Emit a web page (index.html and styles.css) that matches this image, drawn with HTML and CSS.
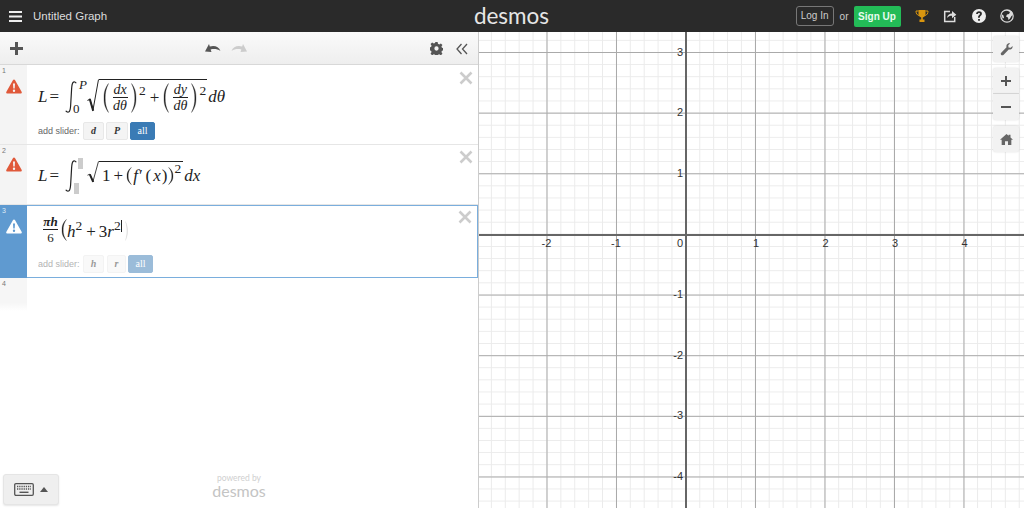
FILE: index.html
```html
<!DOCTYPE html>
<html lang="en">
<head>
<meta charset="utf-8">
<title>Untitled Graph - Desmos</title>
<link rel="stylesheet" href="styles.css">
</head>
<body>
<svg class="defs" width="0" height="0" aria-hidden="true">
  <defs>
    <symbol id="warn" viewBox="0 0 16 15"><path fill-rule="evenodd" d="M8 .5c.5 0 .8.2 1.100.7l6.500 11.600c.5.900 0 1.700-1 1.700H1.400c-1 0-1.500-.8-1-1.700L6.900 1.200C7.200.7 7.500.5 8 .5zM7 4.500l.3 5h1.400l.3-5H7zM8 10.500a1.200 1.200 0 1 0 0 2.400 1.200 1.200 0 0 0 0-2.400z"/></symbol>
    <symbol id="x" viewBox="0 0 14 14"><path d="M1.500 1.500l11 11M12.500 1.500l-11 11" fill="none" stroke="currentColor" stroke-width="2.600"/></symbol>
    <symbol id="lp" viewBox="0 0 6 30" preserveAspectRatio="none"><path d="M5.500.5C1.500 6 1 10 1 15s.5 9 4.500 14.500C2.800 24 2.200 20 2.200 15S2.800 6 5.500.5z" fill="#222" stroke="#222" stroke-width=".3"/></symbol>
    <symbol id="rp" viewBox="0 0 6 30" preserveAspectRatio="none"><path d="M.5.5C4.500 6 5 10 5 15s-.5 9-4.500 14.500C3.200 24 3.800 20 3.800 15S3.200 6 .5.5z" fill="#222" stroke="#222" stroke-width=".3"/></symbol>
    <symbol id="rad" viewBox="0 0 12 34" preserveAspectRatio="none"><path d="M.5 21l2.300-1.500L6 30 11.500.5" fill="none" stroke="#222" stroke-width="1"/><path d="M2.800 19.500L6.200 31" fill="none" stroke="#222" stroke-width="2"/></symbol>
    <symbol id="int" viewBox="0 0 12 32" preserveAspectRatio="none"><path d="M11.200 2.200C10.500 1 9 .5 8 1.500 7 2.500 6.800 5 6.600 8L5.600 25C5.400 28 5 30 4 30.800 3 31.500 1.500 31 .8 29.800" fill="none" stroke="#222" stroke-width="1.200"/></symbol>
  </defs>
</svg>
<div class="app">
  <header class="topbar">
    <div class="top-left">
      <svg class="hamburger" viewBox="0 0 13 11"><path d="M0 1h13M0 5.500h13M0 10h13" stroke="#eee" stroke-width="1.800"/></svg>
      <span class="title">Untitled Graph</span>
    </div>
    <div class="logo">desmos</div>
    <div class="top-right">
      <span class="login">Log In</span>
      <span class="or">or</span>
      <span class="signup">Sign Up</span>
      <svg class="trophy" viewBox="0 0 14 14"><path d="M3.500 1h7v4c0 2-1.500 3.200-2.700 3.500V10.500h1.700V13h-5V10.500h1.700V8.500C5 8.200 3.500 7 3.500 5z" fill="#d9960f"/><path d="M3.500 2H1c0 2.500 1 4 3 4.500M10.500 2H13c0 2.500-1 4-3 4.500" fill="none" stroke="#d9960f" stroke-width="1"/></svg>
      <svg class="top-icon" viewBox="0 0 14 14"><path d="M7 2.500H1.700v10h10V8" fill="none" stroke="#ddd" stroke-width="1.500"/><path d="M4 9c.3-3 2.500-4.500 5-4.500V2l4.300 3.700L9 9.300V6.800C7 6.800 5.300 7.300 4 9z" fill="#ddd"/></svg>
      <svg class="top-icon" viewBox="0 0 14 14"><path fill="#eee" fill-rule="evenodd" d="M7 0a7 7 0 1 1 0 14A7 7 0 0 1 7 0zM6.100 10v1.800h1.800V10H6.100zM7 2.300C5.300 2.300 4.200 3.300 4.100 5h1.800c.1-.8.500-1.100 1.100-1.100s1 .4 1 .9c0 1.200-2 1.300-2 3.500v.5h1.800v-.4c0-1.500 2.100-1.600 2.100-3.700 0-1.600-1.200-2.400-2.900-2.400z"/></svg>
      <svg class="top-icon" viewBox="0 0 14 14"><circle cx="7" cy="7" r="6.200" fill="none" stroke="#ddd" stroke-width="1.200"/><path d="M5 1.500l3 .5 2 1-1 2-2 .5-1 2 2 1 .5 2.500 1.500-1.500 1.500-2.500L13 6 12 3 9 1zM1.500 5l2 1.500L4 9l-1.500.5z" fill="#ddd"/></svg>
    </div>
  </header>
  <div class="main">
    <aside class="panel">
      <div class="toolbar">
        <svg class="tb-plus" viewBox="0 0 13 13"><path d="M6.500 0v13M0 6.500h13" stroke="#555" stroke-width="3"/></svg>
        <div class="history">
          <svg class="tb-arrow" viewBox="0 0 16 11"><path d="M0 8.500L4 1l.8 2.600C9.500 2 13.800 3.800 15.500 8 12.500 6 9 5.600 5.600 6.500L6.500 9z" fill="#555"/></svg>
          <svg class="tb-arrow redo" viewBox="0 0 16 11"><path d="M16 8.500L12 1l-.8 2.600C6.500 2 2.200 3.800.5 8 3.500 6 7 5.600 10.400 6.500L9.500 9z" fill="#ccc"/></svg>
        </div>
        <div class="tb-right">
          <svg class="gear" viewBox="0 0 14 14"><path fill="#555" fill-rule="evenodd" d="M5.800 0h2.400l.4 2 1.300.6 1.800-1.100 1.700 1.700-1.100 1.700.6 1.400 2 .4v2.400l-2 .4-.6 1.300 1.100 1.800-1.700 1.700-1.800-1.100-1.300.6-.4 2H5.800l-.4-2-1.300-.6-1.800 1.100-1.700-1.700 1.100-1.800-.6-1.300-2-.4V5.800l2-.4.6-1.400L.6 2.200 2.300.5l1.800 1.100 1.300-.6zM7 4.700a2.300 2.300 0 1 0 0 4.600 2.300 2.300 0 0 0 0-4.600z"/></svg>
          <svg class="collapse" viewBox="0 0 12 12"><path d="M5.500 1L1 6l4.500 5M11 1L6.500 6l4.500 5" fill="none" stroke="#555" stroke-width="1.300"/></svg>
        </div>
      </div>
      <div class="list">
        <section class="row row-one">
          <div class="gutter"><span class="num">1</span><svg class="warn"><use href="#warn"/></svg></div>
          <div class="body">
            <div class="math">
              <span>L</span><span class="op eq">=</span><svg class="integral"><use href="#int"/></svg>
              <span class="limits"><span class="lim-up">P</span><span class="upright lim-low">0</span></span>
              <span class="sqrt">
                <svg class="radical"><use href="#rad"/></svg>
                <span class="radicand">
                  <svg class="paren"><use href="#lp"/></svg>
                  <span class="frac"><span>dx</span><span class="bar"></span><span>dθ</span></span>
                  <svg class="paren"><use href="#rp"/></svg>
                  <sup class="power">2</sup>
                  <span class="op">+</span>
                  <svg class="paren"><use href="#lp"/></svg>
                  <span class="frac"><span>dy</span><span class="bar"></span><span>dθ</span></span>
                  <svg class="paren"><use href="#rp"/></svg>
                  <sup class="power">2</sup>
                </span>
              </span>
              <span class="tail">dθ</span>
            </div>
            <div class="sliders">
              <span class="add">add slider:</span>
              <span class="sbtn">d</span><span class="sbtn wide">P</span><span class="sbtn all">all</span>
            </div>
          </div>
          <svg class="del"><use href="#x"/></svg>
        </section>
        <section class="row row-two">
          <div class="gutter"><span class="num">2</span><svg class="warn"><use href="#warn"/></svg></div>
          <div class="body">
            <div class="math">
              <span>L</span><span class="op eq">=</span><svg class="integral"><use href="#int"/></svg>
              <span class="limits empty"><span class="slot"></span><span class="slot low"></span></span>
              <span class="sqrt small">
                <svg class="radical"><use href="#rad"/></svg>
                <span class="radicand">
                  <span class="upright">1</span><span class="op">+</span>
                  <svg class="paren mid"><use href="#lp"/></svg>
                  <span>f</span><span class="upright prime">′</span><span class="upright inner">(</span><span class="inner">x</span><span class="upright">)</span>
                  <svg class="paren mid"><use href="#rp"/></svg>
                  <sup class="power">2</sup>
                </span>
              </span>
              <span class="tail">dx</span>
            </div>
          </div>
          <svg class="del"><use href="#x"/></svg>
        </section>
        <section class="row row-three">
          <div class="gutter"><span class="num">3</span><svg class="warn"><use href="#warn"/></svg></div>
          <div class="body">
            <div class="math">
              <span class="frac first"><span>πh</span><span class="bar"></span><span class="upright">6</span></span>
              <svg class="paren big"><use href="#lp"/></svg>
              <span class="terms"><span>h</span><sup class="power">2</sup><span class="op">+</span><span class="upright">3</span><span>r</span><sup class="power cursor">2</sup></span>
              <svg class="paren faint"><use href="#rp"/></svg>
            </div>
            <div class="sliders faded">
              <span class="add">add slider:</span>
              <span class="sbtn">h</span><span class="sbtn narrow">r</span><span class="sbtn all">all</span>
            </div>
          </div>
          <svg class="del"><use href="#x"/></svg>
        </section>
        <section class="row row-four">
          <div class="gutter"><span class="num">4</span></div>
        </section>
      </div>
      <div class="panel-foot">
        <div class="kbd">
          <svg class="kbd-icon" viewBox="0 0 20 13"><rect x=".7" y=".7" width="18.600" height="11.600" rx="1.200" fill="none" stroke="#555" stroke-width="1.300"/><path d="M3 3.500h14M3 6h14" stroke="#555" stroke-width="1.300" stroke-dasharray="1.300 .9"/><path d="M5.500 9.300h9" stroke="#555" stroke-width="1.400"/></svg>
          <span class="caret"></span>
        </div>
        <div class="powered"><span class="pw">powered by</span><span class="pw-logo">desmos</span></div>
      </div>
    </aside>
    <div class="graph">
      <span class="lbl x-m2">-2</span><span class="lbl x-m1">-1</span><span class="lbl x-1">1</span><span class="lbl x-2">2</span><span class="lbl x-3">3</span><span class="lbl x-4">4</span>
      <span class="lbl zero">0</span>
      <span class="lbl y-lbl y-3">3</span><span class="lbl y-lbl y-2">2</span><span class="lbl y-lbl y-1">1</span>
      <span class="lbl y-lbl y-m1">-1</span><span class="lbl y-lbl y-m2">-2</span><span class="lbl y-lbl y-m3">-3</span><span class="lbl y-lbl y-m4">-4</span>
      <div class="controls">
        <div class="ctl solo"><svg class="ctl-icon" viewBox="0 0 14 14"><path d="M13.500 3.200c.3 1.700-.4 3-1.600 3.600-.9.400-1.800.4-2.500.1L3.700 12.800c-.7.700-1.700.7-2.400 0s-.7-1.600 0-2.300L7 4.700c-.3-.9-.2-1.900.2-2.700C7.900.8 9.300.1 10.900.5L8.900 2.500l.3 2.300 2.300.4z" fill="#666"/></svg></div>
        <div class="ctl-group">
          <div class="ctl top"><svg class="ctl-icon small" viewBox="0 0 10 10"><path d="M5 0v10M0 5h10" stroke="#555" stroke-width="2"/></svg></div>
          <div class="ctl bottom"><svg class="ctl-icon small" viewBox="0 0 10 10"><path d="M0 5h10" stroke="#555" stroke-width="2"/></svg></div>
        </div>
        <div class="ctl solo"><svg class="ctl-icon" viewBox="0 0 14 12"><path d="M7 0l2.300 2V.8h2v3L14 6.300h-1.800V12H8.600V8H5.400v4H1.800V6.300H0z" fill="#666"/></svg></div>
      </div>
    </div>
  </div>
</div>
</body>
</html>
```
FILE: styles.css
```css
* { box-sizing: border-box; }
html, body { margin: 0; height: 100%; overflow: hidden; }
body { font-family: "Liberation Sans", Arial, sans-serif; background: #fff; color: #222; }
.defs { position: absolute; }
.app { display: flex; flex-direction: column; width: 1024px; height: 508px; }

/* top bar */
.topbar { height: 32px; flex: none; background: #2a2a2a; display: grid; grid-template-columns: 1fr auto 1fr; align-items: center; padding: 0 10px 0 9px; }
.top-left { display: flex; align-items: center; gap: 11px; }
.hamburger { width: 13px; height: 11px; }
.title { color: #dcdcdc; font-size: 11.500px; }
.logo { font-family: "Lato", sans-serif; font-weight: 400; font-size: 22.500px; color: #e6e6e6; line-height: 32px; }
.top-right { display: flex; align-items: center; justify-content: flex-end; }
.login { height: 20px; width: 38px; margin-right: 6px; border: 1px solid #777; border-radius: 3px; color: #ccc; font-size: 10px; line-height: 18px; text-align: center; }
.or { color: #ccc; font-size: 10px; margin-right: 5px; }
.signup { height: 21px; width: 47px; border-radius: 2px; background: #23bb57; color: #e9fbef; font-size: 10px; font-weight: bold; line-height: 21px; text-align: center; margin-right: 14px; }
.trophy { width: 14px; height: 14px; margin-right: 14.500px; }
.top-icon { width: 14px; height: 14px; margin-right: 14.500px; }
.top-icon:last-child { margin-right: 0; }

.main { flex: 1; display: flex; min-height: 0; }

/* left panel */
.panel { width: 479px; flex: none; display: flex; flex-direction: column; border-right: 1px solid #ccc; background: #fff; }
.toolbar { height: 33px; flex: none; display: grid; grid-template-columns: 195px auto 1fr; align-items: center; padding: 1px 10px 0; background: linear-gradient(#fafafa, #eeeeee); border-bottom: 1px solid #d8d8d8; }
.tb-plus { width: 13px; height: 13px; }
.history { display: flex; gap: 10px; }
.tb-arrow { width: 16px; height: 11px; }
.tb-right { display: flex; justify-content: flex-end; align-items: center; gap: 13px; }
.gear { width: 13px; height: 13px; }
.collapse { width: 12px; height: 12px; }
.list { flex: 1; min-height: 0; }

.row { display: flex; border-bottom: 1px solid #e6e6e6; position: relative; }
.row-one { height: 80px; }
.row-two { height: 60px; }
.row-three { height: 73px; border: 1px solid #7aaedd; border-left: 0; }
.row-four { height: 33px; border-bottom: 0; }
.gutter { width: 27px; flex: none; background: #f4f4f4; display: flex; flex-direction: column; align-items: center; padding-top: 14px; position: relative; color: #e0593a; }
.num { position: absolute; left: 2px; top: 1px; font-size: 7px; line-height: 9px; color: #777; }
.warn { width: 16px; height: 15px; fill: currentColor; }
.row-two .gutter { padding-top: 12px; }
.row-three .gutter { background: #5f9ad0; color: #fff; margin-top: -1px; margin-bottom: -1px; padding-top: 14px; }
.row-three .num { color: #dfeaf5; }
.row-four .gutter { background: linear-gradient(#f6f6f6 75%, #fff); }
.body { flex: 1; padding-left: 11px; display: flex; flex-direction: column; }
.del { position: absolute; right: 5px; top: 6px; width: 14px; height: 14px; color: #ccc; }
.row-two .del { top: 5px; }
.row-three .del { top: 4px; }

/* math */
.math { display: flex; align-items: center; font: italic 17px "Liberation Serif", "DejaVu Serif", serif; color: #222; }
.row-one .math { height: 47px; margin-top: 8px; }
.row-two .math { height: 50px; margin-top: 6px; }
.row-three .math { height: 40px; margin-top: 3px; margin-left: 5px; }
.upright { font-style: normal; }
.op { font-style: normal; margin: 0 3px; }
.eq { margin: 0 6px 0 2px; }
.integral { width: 12px; height: 32px; flex: none; margin-right: -1px; }
.limits { display: flex; flex-direction: column; align-items: flex-start; justify-content: space-between; height: 36px; font-size: 13px; line-height: 12px; width: 11px; }
.lim-up { margin-left: 3px; }
.lim-low { margin-left: -3px; }
.slot { width: 5px; height: 11px; background: #ccc; margin-left: 2px; }
.slot.low { margin-left: -2px; }
.sqrt { display: flex; align-items: stretch; height: 35px; }
.sqrt.small { height: 23px; margin-bottom: 8px; }
.radical { width: 12px; height: 100%; flex: none; }
.radicand { display: flex; align-items: center; border-top: 1px solid #222; padding: 1px 0 0 0; }
.paren { width: 6px; height: 30px; margin: 0 1px; flex: none; }
.radicand > .paren:first-child { margin-left: 4px; }
.sqrt.small .radicand { padding: 7px 0 0 3px; }
.paren.mid { height: 18px; width: 6px; margin: 0 1px 0 0; }
.paren.big { height: 22px; margin: 2px 0 0 3px; }
.paren.faint { opacity: .2; width: 3px; height: 20px; margin: 4px 0 0 2px; }
.frac { display: flex; flex-direction: column; align-items: center; font-size: 14px; line-height: 15px; margin: 0 2.500px; }
.frac.first { font-weight: bold; font-size: 13px; margin: 0; }
.frac.first .upright { font-weight: normal; }
.bar { height: 1px; width: 100%; min-width: 15px; background: #222; }
.power { font-size: 13.500px; font-style: normal; line-height: 12px; align-self: flex-start; margin: 4px 1px 0 1px; }
.sqrt.small .power { margin: -6px 2px 0 0; }
.terms { display: flex; align-items: center; margin-top: 6px; }
.terms .power { margin: 0 1px 12px 0; align-self: center; }
.cursor { border-right: 1px solid #222; }
.tail { margin-left: 1px; }
.prime { margin: 0 2px 0 1px; }
.inner { margin: 0 1px; }

/* sliders */
.sliders { display: flex; align-items: center; gap: 2px; height: 18px; margin-top: 2px; }
.row-three .sliders { margin-top: 6px; }
.add { font-size: 9px; color: #666; width: 43px; }
.sbtn { width: 21px; height: 18px; border-radius: 2px; background: #f4f4f4; border: 1px solid #e8e8e8; font: italic bold 10px/16px "Liberation Serif", serif; text-align: center; color: #333; }
.sbtn.wide { width: 22px; }
.sbtn.narrow { width: 19px; margin-left: 1px; }
.sbtn.all { width: 25px; background: #3a7bb5; border-color: #3a7bb5; color: #fff; font-style: normal; font-weight: normal; }
.faded { opacity: .5; }

/* footer */
.panel-foot { flex: none; height: 37px; display: grid; grid-template-columns: 1fr auto 1fr; padding: 0 3px; }
.kbd { width: 56px; height: 31px; margin-top: 3px; background: #efefef; border: 1px solid #e5e5e5; border-radius: 3px; display: flex; align-items: center; padding-left: 10px; gap: 6px; box-shadow: 0 1px 2px rgba(0,0,0,.1); }
.kbd-icon { width: 20px; height: 13px; }
.caret { width: 0; height: 0; border-left: 4px solid transparent; border-right: 4px solid transparent; border-bottom: 5px solid #555; }
.powered { display: flex; flex-direction: column; align-items: center; padding-top: 3px; }
.pw { font-size: 8.500px; line-height: 9px; color: #cfcfcf; font-family: "Lato", sans-serif; }
.pw-logo { font-family: "Lato", sans-serif; font-weight: 400; font-size: 16px; line-height: 15px; color: #c4c4c4; }

/* graph paper: origin at (206.7, 201.700) inside this box */
.graph { flex: 1; position: relative; overflow: hidden; background-color: #fff;
  background-image:
    linear-gradient(90deg, #666 1.500px, transparent 1.500px),
    linear-gradient(#666 1.500px, transparent 1.500px),
    linear-gradient(90deg, #aaa 1px, transparent 1px),
    linear-gradient(#aaa 1px, transparent 1px),
    linear-gradient(90deg, #ebebeb 1px, transparent 1px),
    linear-gradient(#ebebeb 1px, transparent 1px);
  background-size: 100% 100%, 100% 100%, 69.5px 100%, 100% 60.650px, 13.900px 100%, 100% 12.130px;
  background-position: 206px 0, 0 201.500px, 67.500px 0, 0 20px, 11.900px 0, 0 7.870px;
  background-repeat: no-repeat, no-repeat, repeat-x, repeat-y, repeat-x, repeat-y;
}
.lbl { position: absolute; font-size: 11px; line-height: 12px; color: #333; width: 20px; margin-left: -10px; text-align: center; top: 205px; }
.x-m2 { left: 67.500px; }
.x-m1 { left: 137px; }
.zero { left: 201px; }
.x-1 { left: 277px; }
.x-2 { left: 346.500px; }
.x-3 { left: 416px; }
.x-4 { left: 485.500px; }
.y-lbl { left: 200px; margin-left: -4px; text-align: right; width: 8px; margin-top: -6px; }
.y-lbl.y-m1, .y-lbl.y-m2, .y-lbl.y-m3, .y-lbl.y-m4 { width: 14px; margin-left: -10px; }
.y-3 { top: 19.500px; }
.y-2 { top: 80px; }
.y-1 { top: 140.500px; }
.y-m1 { top: 262px; }
.y-m2 { top: 322.500px; }
.y-m3 { top: 383px; }
.y-m4 { top: 443.500px; }

.controls { position: absolute; right: 5px; top: 4px; display: flex; flex-direction: column; gap: 6px; width: 26px; }
.ctl { height: 26px; background: #f2f2f2; display: flex; align-items: center; justify-content: center; box-shadow: 0 0 2px rgba(0,0,0,.15); }
.ctl.solo { border-radius: 3px; }
.ctl.top { border-radius: 3px 3px 0 0; border-bottom: 1px solid #ddd; }
.ctl.bottom { border-radius: 0 0 3px 3px; }
.ctl-icon { width: 13px; height: 13px; }
.ctl-icon.small { width: 10px; height: 10px; }
```
